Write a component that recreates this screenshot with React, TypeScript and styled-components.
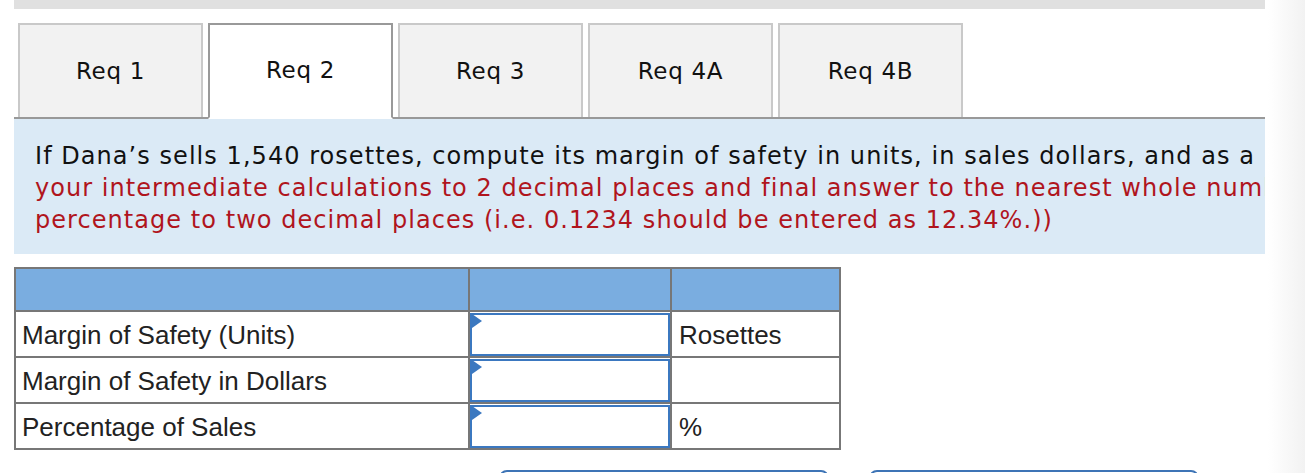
import styled, { createGlobalStyle } from "styled-components";

const GlobalStyle = createGlobalStyle`
  html, body {
    margin: 0;
    padding: 0;
  }
  body {
    background: linear-gradient(to right, #fff 0, #fff 1268px, #f2f2f2 1305px);
    overflow: hidden;
  }
`;

const tabs = ["Req 1", "Req 2", "Req 3", "Req 4A", "Req 4B"];

const rows = [
  { label: "Margin of Safety (Units)", unit: "Rosettes" },
  { label: "Margin of Safety in Dollars", unit: "" },
  { label: "Percentage of Sales", unit: "%" },
];

export default function App() {
  return (
    <>
      <GlobalStyle />
      <Page>
        <TopBar />
        <TabStrip>
          {tabs.map((t) => (
            <Tab key={t} $active={t === "Req 2"}>
              {t}
            </Tab>
          ))}
        </TabStrip>
        <Question>
          <Line>
            If Dana’s sells 1,540 rosettes, compute its margin of safety in units, in sales dollars, and as a
          </Line>
          <Line $red>
            your intermediate calculations to 2 decimal places and final answer to the nearest whole number.
          </Line>
          <Line $red>
            percentage to two decimal places (i.e. 0.1234 should be entered as 12.34%.))
          </Line>
        </Question>
        <Grid>
          <HeadCell />
          <HeadCell />
          <HeadCell />
          {rows.map((r) => (
            <Row key={r.label}>
              <LabelCell>{r.label}</LabelCell>
              <InputCell>
                <Flagged>
                  <AnswerInput type="text" aria-label={r.label} />
                </Flagged>
              </InputCell>
              <LabelCell $unit>{r.unit}</LabelCell>
            </Row>
          ))}
        </Grid>
        <NavRow>
          <NavButton aria-label="Req 1" />
          <NavButton aria-label="Req 3" />
        </NavRow>
      </Page>
    </>
  );
}

const Page = styled.div`
  width: 1251px;
  padding-left: 14px;
`;

const TopBar = styled.div`
  height: 9px;
  background: #e0e0e0;
`;

const TabStrip = styled.div`
  display: flex;
  align-items: flex-end;
  gap: 5px;
  height: 94px;
  margin-top: 14px;
  padding-left: 4px;
  border-bottom: 2px solid #999;
`;

const Tab = styled.div<{ $active?: boolean }>`
  box-sizing: border-box;
  width: 185px;
  height: ${(p) => (p.$active ? "96px" : "94px")};
  margin-bottom: ${(p) => (p.$active ? "-2px" : "0")};
  display: flex;
  align-items: center;
  justify-content: center;
  padding-bottom: ${(p) => (p.$active ? "2px" : "0")};
  background: ${(p) => (p.$active ? "#fff" : "#f2f2f2")};
  border: 2px solid ${(p) => (p.$active ? "#999" : "#c9c9c9")};
  border-bottom: ${(p) => (p.$active ? "2px solid #fff" : "none")};
  font-family: "DejaVu Sans", Verdana, sans-serif;
  font-size: 23px;
  letter-spacing: 0.7px;
  color: #111;
`;

const Question = styled.div`
  background: #dbeaf6;
  padding: 21px 0 18px 21px;
  overflow: hidden;
  font-family: "DejaVu Sans", Verdana, sans-serif;
  font-size: 24px;
  letter-spacing: 1.05px;
  line-height: 32px;
`;

const Line = styled.div<{ $red?: boolean }>`
  white-space: nowrap;
  color: ${(p) => (p.$red ? "#b0151d" : "#111")};
`;

const Grid = styled.div`
  display: grid;
  grid-template-columns: 452px 200px 167px;
  grid-template-rows: 41px repeat(3, 44px);
  gap: 2px;
  padding: 2px;
  width: 823px;
  margin-top: 13px;
  background: #777;
`;

const HeadCell = styled.div`
  background: #7aade0;
`;

const Row = styled.div`
  display: contents;
`;

const LabelCell = styled.div<{ $unit?: boolean }>`
  display: flex;
  align-items: center;
  padding: 3px 0 0 ${(p) => (p.$unit ? "7px" : "6px")};
  background: #fff;
  font-family: "Liberation Sans", Arial, sans-serif;
  font-size: 26px;
  color: #222;
`;

const InputCell = styled.div`
  background: #fff;
  padding: 1px 0 0 0;
`;

const Flagged = styled.div`
  position: relative;
  height: 100%;

  &::before {
    content: "";
    position: absolute;
    left: 2px;
    top: 1px;
    border-left: 10px solid #3b78c0;
    border-top: 7px solid transparent;
    border-bottom: 7px solid transparent;
  }
`;

const AnswerInput = styled.input`
  box-sizing: border-box;
  display: block;
  width: 100%;
  height: 100%;
  margin: 0;
  border: 2px solid #3b78c0;
  outline: none;
  background: #fff;
  font-family: "Liberation Sans", Arial, sans-serif;
  font-size: 24px;
`;

const NavRow = styled.div`
  display: flex;
  gap: 40px;
  margin-top: 20px;
  padding-left: 485px;
`;

const NavButton = styled.button`
  box-sizing: border-box;
  width: 330px;
  height: 50px;
  border: 2px solid #3d74b6;
  border-radius: 8px;
  background: #fff;
`;
